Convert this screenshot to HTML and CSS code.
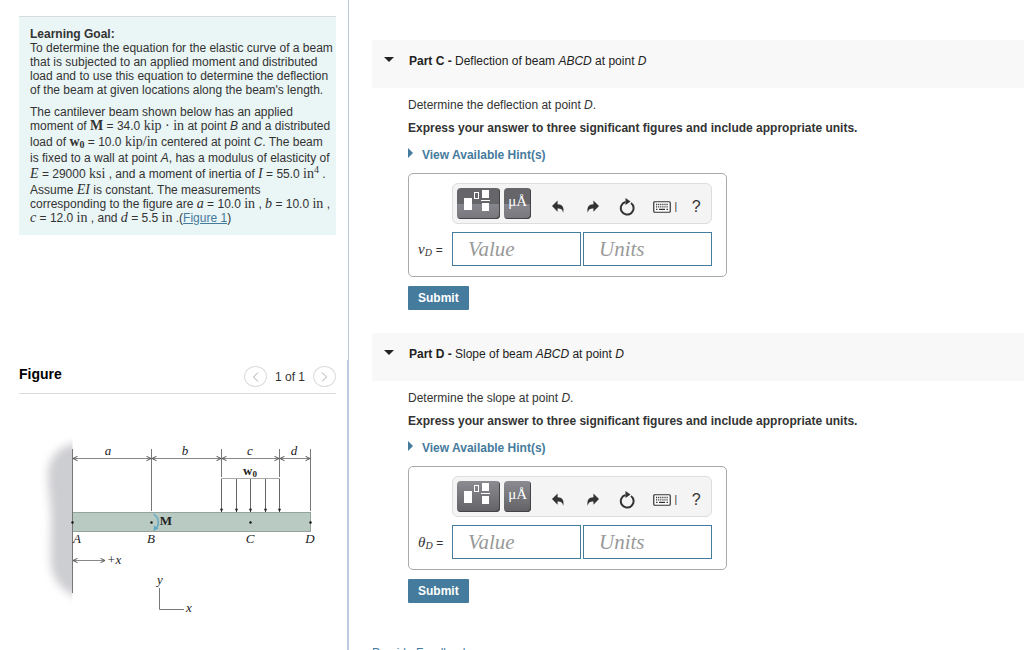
FILE: index.html
```html
<!DOCTYPE html>
<html lang="en">
<head>
<meta charset="utf-8">
<title>Elastic curve of a beam</title>
<link rel="stylesheet" href="styles.css">
</head>
<body>
<svg class="defs" aria-hidden="true">
  <symbol id="templates" viewBox="0 0 43 31">
    <g fill="#fff"><rect x="7" y="10" width="8" height="12"/><rect x="25" y="2" width="7" height="8"/><rect x="24" y="12" width="9" height="1"/><rect x="25" y="15" width="7" height="8"/></g>
    <rect x="17.500" y="4.500" width="4" height="6" fill="none" stroke="#fff"/>
  </symbol>
  <symbol id="undo" viewBox="0 0 14 14"><path d="M6 0v4c5 0 7.500 3 6 9.500C11.500 10 10 8.700 6 8.700V12L0 6z" fill="#333"/></symbol>
  <symbol id="redo" viewBox="0 0 14 14"><path d="M8 0v4C3 4 .5 7 2 13.500 2.500 10 4 8.700 8 8.700V12l6-6z" fill="#333"/></symbol>
  <symbol id="reset" viewBox="0 0 16 18"><path d="M6.500 4A6.400 6.400 0 1 0 12 5" fill="none" stroke="#333" stroke-width="2"/><path d="M6.500 0l5 3.500-5 3.500z" fill="#333"/></symbol>
  <symbol id="keyboard" viewBox="0 0 18 12"><rect x=".75" y=".75" width="16.500" height="10.500" rx="1" fill="#fff" stroke="#333" stroke-width="1.200"/><path d="M3 3.500h12M3 5.800h12" stroke="#333" stroke-width="1.300" stroke-dasharray="1.200 .9"/><path d="M3 8.300h1.500M6 8.300h6M13.500 8.300H15" stroke="#333" stroke-width="1.200"/></symbol>
</svg>

<aside class="side">
  <div class="side-top">
    <section class="goal">
      <h2 class="goal-title">Learning Goal:</h2>
      <p>To determine the equation for the elastic curve of a beam<br>that is subjected to an applied moment and distributed<br>load and to use this equation to determine the deflection<br>of the beam at given locations along the beam's length.</p>
      <p>The cantilever beam shown below has an applied<br>moment of <b class="math">M</b> = 34.0 <span class="math">kip · in</span> at point <i>B</i> and a distributed<br>load of <b class="math tall">w<sub>0</sub></b> = 10.0 <span class="math">kip/in</span> centered at point <i>C</i>. The beam<br>is fixed to a wall at point <i>A</i>, has a modulus of elasticity of<br><i class="math">E</i> = 29000 <span class="math">ksi</span> , and a moment of inertia of <i class="math">I</i> = 55.0 <span class="math tall">in<sup>4</sup></span> .<br>Assume <i class="math">EI</i> is constant. The measurements<br>corresponding to the figure are <i class="math">a</i> = 10.0 <span class="math">in</span> , <i class="math">b</i> = 10.0 <span class="math">in</span> ,<br><i class="math">c</i> = 12.0 <span class="math">in</span> , and <i class="math">d</i> = 5.5 <span class="math">in</span> .(<a href="#figure">Figure 1</a>)</p>
    </section>
  </div>
  <section class="figure" id="figure">
    <header class="figure-head">
      <h2 class="figure-title">Figure</h2>
      <nav class="pager">
        <button class="pager-btn" aria-label="Previous figure"><svg width="7" height="10" viewBox="0 0 7 10"><path d="M6 .5L1.500 5 6 9.500"/></svg></button>
        <span>1 of 1</span>
        <button class="pager-btn" aria-label="Next figure"><svg width="7" height="10" viewBox="0 0 7 10"><path d="M1 .5L5.500 5 1 9.500"/></svg></button>
      </nav>
    </header>
    <svg class="beam" viewBox="19 430 317 190" role="img" aria-label="Cantilever beam ABCD">
      <defs>
        <filter id="soft" x="-30%" y="-10%" width="160%" height="120%"><feGaussianBlur stdDeviation="4"/></filter>
        <clipPath id="wallclip"><rect x="30" y="430" width="42.500" height="190"/></clipPath>
        <marker id="tip" viewBox="0 0 6 6" refX="5.500" refY="3" markerWidth="6" markerHeight="6" orient="auto-start-reverse"><path d="M1 .8L5.500 3 1 5.200" fill="none" stroke="#555"/></marker>
        <marker id="load" viewBox="0 0 4 5" refX="4" refY="2.500" markerWidth="5" markerHeight="4" orient="auto"><path d="M0 .5L4 2.500 0 4.500z" fill="#222"/></marker>
      </defs>
      <g clip-path="url(#wallclip)"><path d="M84 443C62 443 49 454 48 475c0 20 3 26 3 45 0 20-1 28 0 45 2 17 13 28 33 35z" fill="#cdced1" filter="url(#soft)"/></g>
      <rect x="72.500" y="512.500" width="238" height="19" fill="#b9cac2" stroke="#94a49c"/>
      <g stroke="#666" fill="none">
        <path d="M72.500 449v144M151.500 449v62M221.500 449v28M279.500 449v28M310.500 449v62" stroke="#777"/>
        <path d="M221 478.500h59" stroke="#aaa"/>
        <g stroke="#888"><path d="M73 458.500h78" marker-start="url(#tip)" marker-end="url(#tip)"/><path d="M152 458.500h69" marker-start="url(#tip)" marker-end="url(#tip)"/><path d="M222 458.500h57" marker-start="url(#tip)" marker-end="url(#tip)"/><path d="M280 458.500h30" marker-start="url(#tip)" marker-end="url(#tip)"/><path d="M73 560.500h32" marker-start="url(#tip)" marker-end="url(#tip)"/></g>
        <path d="M221.500 479v33" marker-end="url(#load)"/><path d="M236.500 479v33" marker-end="url(#load)"/><path d="M250.500 479v33" marker-end="url(#load)"/><path d="M265.500 479v33" marker-end="url(#load)"/><path d="M279.500 479v33" marker-end="url(#load)"/>
        <path d="M159.500 588v21.500H184" stroke="#777"/>
      </g>
      <path d="M153.500 514c6 4 6 11 2 15" fill="none" stroke="#5fa9c4" stroke-width="1.500"/><path d="M153.500 531l.5-5.500 4.500 3z" fill="#5fa9c4"/>
      <g fill="#111"><circle cx="72.500" cy="522.500" r="1.200"/><circle cx="151.500" cy="522.500" r="1.200"/><circle cx="250.500" cy="522.500" r="1.200"/><circle cx="310.500" cy="522.500" r="1.200"/></g>
      <g class="beam-label">
        <text x="108" y="455">a</text><text x="185" y="455">b</text><text x="250" y="455">c</text><text x="294" y="455">d</text>
        <text x="77" y="543">A</text><text x="151" y="543">B</text><text x="250" y="543">C</text><text x="310" y="543">D</text>
        <text x="114" y="564">+x</text><text x="160" y="584">y</text><text x="189" y="612">x</text>
        <text class="bold" x="166" y="525">M</text><text class="bold" x="250" y="475">w<tspan class="small" dy="2">0</tspan></text>
      </g>
    </svg>
  </section>
</aside>

<main class="main">
  <section class="part">
    <h2 class="part-head"><button class="part-toggle" aria-expanded="true"><span class="caret"></span><span><b>Part C -</b> Deflection of beam <i>ABCD</i> at point <i>D</i></span></button></h2>
    <div class="part-body">
      <p>Determine the deflection at point <i>D</i>.</p>
      <p class="instruct">Express your answer to three significant figures and include appropriate units.</p>
      <button class="hints"><span class="hint-caret"></span>View Available Hint(s)</button>
      <form class="answer">
        <div class="toolbar">
          <button type="button" class="key key-wide" aria-label="Templates"><svg width="43" height="31"><use href="#templates"/></svg></button>
          <button type="button" class="key">μÅ</button>
          <button type="button" class="tool" aria-label="Undo"><svg width="13" height="14"><use href="#undo"/></svg></button>
          <button type="button" class="tool" aria-label="Redo"><svg width="13" height="14"><use href="#redo"/></svg></button>
          <button type="button" class="tool" aria-label="Reset"><svg width="16" height="18"><use href="#reset"/></svg></button>
          <button type="button" class="tool tool-keys" aria-label="Keyboard shortcuts"><svg width="18" height="12"><use href="#keyboard"/></svg><span>|</span></button>
          <button type="button" class="tool tool-help" aria-label="Help">?</button>
        </div>
        <label class="symbol" for="c-value"><i>v<sub>D</sub></i> <span class="equals">=</span></label>
        <div class="fields"><input id="c-value" placeholder="Value"><input aria-label="Units" placeholder="Units"></div>
      </form>
      <button class="submit">Submit</button>
    </div>
  </section>
  <section class="part">
    <h2 class="part-head"><button class="part-toggle" aria-expanded="true"><span class="caret"></span><span><b>Part D -</b> Slope of beam <i>ABCD</i> at point <i>D</i></span></button></h2>
    <div class="part-body">
      <p>Determine the slope at point <i>D</i>.</p>
      <p class="instruct">Express your answer to three significant figures and include appropriate units.</p>
      <button class="hints"><span class="hint-caret"></span>View Available Hint(s)</button>
      <form class="answer">
        <div class="toolbar toolbar-smooth">
          <button type="button" class="key key-wide" aria-label="Templates"><svg width="43" height="31"><use href="#templates"/></svg></button>
          <button type="button" class="key">μÅ</button>
          <button type="button" class="tool" aria-label="Undo"><svg width="13" height="14"><use href="#undo"/></svg></button>
          <button type="button" class="tool" aria-label="Redo"><svg width="13" height="14"><use href="#redo"/></svg></button>
          <button type="button" class="tool" aria-label="Reset"><svg width="16" height="18"><use href="#reset"/></svg></button>
          <button type="button" class="tool tool-keys" aria-label="Keyboard shortcuts"><svg width="18" height="12"><use href="#keyboard"/></svg><span>|</span></button>
          <button type="button" class="tool tool-help" aria-label="Help">?</button>
        </div>
        <label class="symbol" for="d-value"><i>θ<sub>D</sub></i> <span class="equals">=</span></label>
        <div class="fields"><input id="d-value" placeholder="Value"><input aria-label="Units" placeholder="Units"></div>
      </form>
      <button class="submit">Submit</button>
    </div>
  </section>
  <a class="feedback" href="#feedback">Provide Feedback</a>
</main>
</body>
</html>
```
FILE: styles.css
```css
* { box-sizing: border-box; }
body {
  margin: 0;
  display: flex;
  height: 100vh;
  overflow: hidden;
  background: #fff;
  color: #333;
  font: 12px/16px "Liberation Sans", Arial, sans-serif;
}
h2, p { margin: 0; font-size: inherit; }
button { font: inherit; color: inherit; border: 0; padding: 0; background: none; cursor: pointer; }
a { color: #457b9d; }
.defs { position: absolute; width: 0; height: 0; }

.side { flex: none; width: 349px; display: flex; flex-direction: column; }
.side-top { height: 360px; padding: 16px 12px 0 19px; border-right: 1px solid #bccbdd; }
.goal {
  padding: 10px 4px 10px 11px;
  border-top: 1px solid #d8dcdc;
  background: #eaf5f5;
  line-height: 14px;
  white-space: nowrap;
}
.goal p + p { margin-top: 8px; }
.math { font-family: "Liberation Serif", serif; font-size: 14px; line-height: 0; }
.tall { line-height: 18px; }
sub, sup { font-size: 10px; line-height: 0; }
sub { vertical-align: -2px; }
sup { vertical-align: 5px; }

.figure { flex: 1; padding: 0 11px 0 19px; border-right: 2px solid #bccbdd; }
.figure-head {
  display: flex;
  justify-content: space-between;
  align-items: center;
  height: 34px;
  border-bottom: 1px solid #d8dcdc;
}
.figure-title { color: #000; font-size: 14px; padding-bottom: 6px; }
.pager { display: flex; align-items: center; gap: 8px; }
.pager-btn {
  display: grid;
  place-items: center;
  width: 23px;
  height: 21px;
  border: 1px solid #ddd;
  border-radius: 50%;
}
.pager-btn path { fill: none; stroke: #aaa; }
.beam { display: block; width: 100%; margin-top: 36px; }
.beam-label { font: italic 13px "Liberation Serif", serif; fill: #222; text-anchor: middle; }
.bold { font-style: normal; font-weight: bold; }
.small { font-size: 9px; }

.main { flex: 1; padding: 40px 0 0 23px; overflow: hidden; }
.part { padding-bottom: 23px; }
.part-head { background: #f8f8f8; height: 48px; padding: 13px 12px; font-weight: normal; }
.part-toggle { display: flex; align-items: center; gap: 15px; color: #222; }
.caret { margin-bottom: 4px; border: 5px solid transparent; border-top-color: #222; border-bottom: 0; }
.part-body { padding: 9px 36px 0; }
.instruct { margin-top: 7px; font-weight: bold; }
.hints { display: flex; align-items: center; gap: 9px; margin: 11px 0 10px; color: #457b9d; font-weight: bold; }
.hint-caret { margin-bottom: 4px; border: 5px solid transparent; border-left-color: #457b9d; border-right: 0; }

.answer {
  display: grid;
  grid-template-columns: 43px 260px;
  row-gap: 8px;
  width: fit-content;
  padding: 9px 14px 10px 0;
  border: 1px solid #aaa;
  border-radius: 5px;
}
.toolbar {
  grid-column: 2;
  display: flex;
  align-items: center;
  height: 41px;
  padding: 0 4px;
  border: 1px solid #ddd;
  border-radius: 6px;
  background: #f4f4f4;
}
.key {
  width: 28px;
  height: 31px;
  padding-bottom: 4px;
  border-radius: 4px;
  color: #fff;
  font: 15px "Liberation Serif", serif;
  background: linear-gradient(#66666a 0 50%, #86868e 50%, #77777c);
  box-shadow: inset -1px -1px 0 #444;
}
.key-wide { width: 43px; margin-right: 4px; padding: 0; }
.key svg { display: block; }
.toolbar-smooth .key { background: linear-gradient(#8b8b91, #626266); }
.tool { display: flex; align-items: center; justify-content: center; width: 35px; padding-top: 6px; }
.key + .tool { margin-left: 10px; }
.tool-keys { width: 42px; gap: 4px; font-size: 10px; }
.tool-help { width: 22px; font-size: 16px; }
.symbol { align-self: center; padding-left: 9px; font: 15px "Liberation Serif", serif; white-space: nowrap; }
.equals { font: 12px "Liberation Sans", Arial, sans-serif; }
.fields { display: flex; gap: 2px; }
.fields input {
  flex: 1;
  min-width: 0;
  height: 34px;
  padding: 0 15px;
  border: 1px solid #457b9d;
  background: #fff;
  font: italic 21px "Liberation Serif", serif;
}
.fields input::placeholder { color: #999; }
.submit {
  display: block;
  height: 24px;
  margin-top: 9px;
  padding: 0 10px;
  border-radius: 1px;
  background: #457b9d;
  color: #fff;
  font-weight: bold;
}
.feedback { display: block; margin-top: 19px; text-decoration: none; }
```
